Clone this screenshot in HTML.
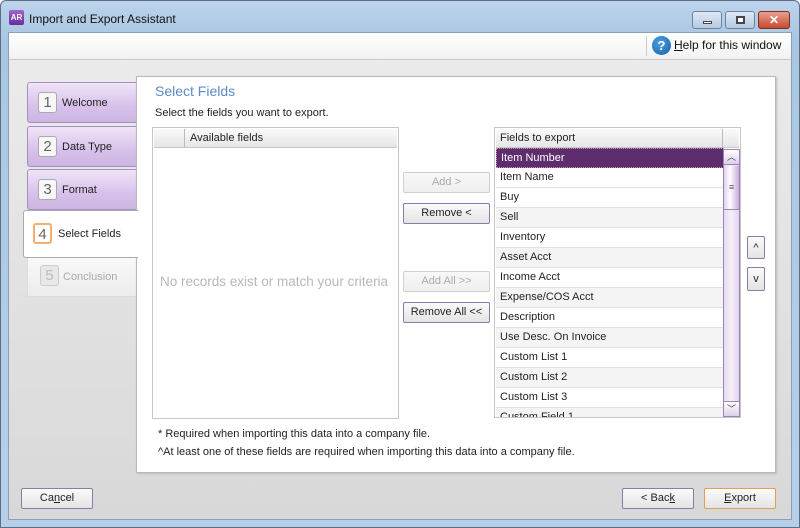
<!DOCTYPE html>
<html><head><style>
*{box-sizing:border-box;margin:0;padding:0}
body{width:800px;height:528px;overflow:hidden;font-family:"Liberation Sans",sans-serif;font-size:11px;color:#222;background:#fff;position:relative}
.abs{position:absolute}
.frame{left:0;top:0;width:800px;height:528px;background:linear-gradient(#bcd3ea,#a9c6e3 40px,#b7d0ea);border:1px solid #5a6f86;border-radius:6px 6px 0 0}
.inner{left:8px;top:32px;width:784px;height:488px;background:linear-gradient(#ececec,#d8d8d8);border:1px solid #8aa0b8}
.tb{left:9px;top:33px;width:782px;height:27px;background:linear-gradient(#fff,#f2f2f2);border-bottom:1px solid #c8c8c8}
.btn{position:absolute;height:21px;border:1px solid #8e7aa8;border-radius:2px;background:linear-gradient(#fafafa,#e4e4e4);text-align:center;line-height:19px;font-size:11px;color:#222}
.dis{border-color:#d0d0d0;color:#aaa;background:linear-gradient(#f8f8f8,#efefef)}
.tab{position:absolute;left:27px;width:110px;height:41px;border:1px solid #a58fc0;border-radius:3px 0 0 3px;background:linear-gradient(#f0e4f8,#d7c1ea 60%,#cdb4e4);font-size:11px;line-height:40px}
.num{position:absolute;left:10px;top:9px;width:19px;height:21px;border:1px solid #aaa;border-radius:3px;background:#f7f7f7;text-align:center;line-height:19px;font-size:15px;color:#666}
.tab span.l{position:absolute;left:34px;top:0}
.row{position:absolute;left:0;width:228px;height:20px;line-height:18px;padding-left:4px;border-bottom:1px solid #e2e2e2;font-size:11px}
</style></head><body>
<div class="abs frame"></div>
<div class="abs" style="left:9px;top:10px;width:15px;height:15px;background:linear-gradient(#a064d0,#6a2c9c);border-radius:2px;color:#fff;font-size:8px;font-weight:bold;line-height:15px;text-align:center">AR</div>
<div class="abs" style="left:29px;top:12px;font-size:12px;color:#111">Import and Export Assistant</div>
<div class="abs" style="left:692px;top:11px;width:30px;height:18px;border:1px solid #6d82a0;border-radius:3px;background:linear-gradient(#dfe9f5,#b6c9e0)"><div class="abs" style="left:10px;top:9px;width:9px;height:3px;background:#fff;border:1px solid #445"></div></div>
<div class="abs" style="left:725px;top:11px;width:30px;height:18px;border:1px solid #6d82a0;border-radius:3px;background:linear-gradient(#dfe9f5,#b6c9e0)"><div class="abs" style="left:10px;top:4px;width:9px;height:8px;border:2px solid #445;background:#fff"></div></div>
<div class="abs" style="left:758px;top:11px;width:32px;height:18px;border:1px solid #7a3020;border-radius:3px;background:linear-gradient(#e8a090,#c64a30);color:#fff;font-weight:bold;text-align:center;line-height:16px;font-size:12px">✕</div>
<div class="abs inner"></div>
<div class="abs tb"></div>
<div class="abs" style="left:646px;top:36px;width:1px;height:20px;background:#ccc"></div>
<div class="abs" style="left:652px;top:36px;width:19px;height:19px;border-radius:50%;background:radial-gradient(circle at 40% 35%,#4aa0e0,#1560a8);color:#fff;font-weight:bold;text-align:center;line-height:19px;font-size:13px">?</div>
<div class="abs" style="left:674px;top:38px;font-size:12px;color:#111"><u>H</u>elp for this window</div>

<div class="tab" style="top:82px"><div class="num">1</div><span class="l">Welcome</span></div>
<div class="tab" style="top:126px"><div class="num">2</div><span class="l">Data Type</span></div>
<div class="tab" style="top:169px"><div class="num">3</div><span class="l">Format</span></div>
<div class="abs" style="left:27px;top:254px;width:110px;height:43px;border:1px solid #ddd;background:linear-gradient(#fafafa,#ececec)"><div class="num" style="left:12px;top:10px;color:#bbb;border-color:#ccc;background:#e8e8e8">5</div><span class="abs" style="left:35px;top:16px;color:#aaa">Conclusion</span></div>

<div class="abs" style="left:136px;top:76px;width:640px;height:397px;background:#fff;border:1px solid #b8b8b8;box-shadow:1px 1px 2px #bbb"></div>
<div class="abs" style="left:23px;top:210px;width:115px;height:48px;background:#fff;border:1px solid #aaa;border-right:none;border-radius:3px 0 0 3px"><div class="num" style="left:9px;top:12px;border:2px solid #f0b070;background:#fff">4</div><span class="abs" style="left:34px;top:17px">Select Fields</span></div>

<div class="abs" style="left:155px;top:83px;font-size:14px;color:#5a8cc8">Select Fields</div>
<div class="abs" style="left:155px;top:107px">Select the fields you want to export.</div>

<div class="abs" style="left:152px;top:127px;width:247px;height:292px;border:1px solid #c6c6c6;background:#fff">
<div class="abs" style="left:1px;top:1px;width:243px;height:19px;background:linear-gradient(#fafafa,#e6e6e6);border-bottom:1px solid #c8c8c8"><div class="abs" style="left:30px;top:0;width:1px;height:19px;background:#bbb"></div><span class="abs" style="left:36px;top:3px">Available fields</span></div>
<div class="abs" style="left:7px;top:146px;font-size:13.5px;color:#b8b8b8;white-space:nowrap">No records exist or match your criteria</div>
</div>

<div class="btn dis" style="left:403px;top:172px;width:87px">Add &gt;</div>
<div class="btn" style="left:403px;top:203px;width:87px">Remove &lt;</div>
<div class="btn dis" style="left:403px;top:271px;width:87px">Add All &gt;&gt;</div>
<div class="btn" style="left:403px;top:302px;width:87px">Remove All &lt;&lt;</div>

<div class="abs" style="left:494px;top:127px;width:247px;height:291px;border:1px solid #c6c6c6;background:#fff;overflow:hidden">
<div class="abs" style="left:1px;top:1px;width:243px;height:19px;background:linear-gradient(#fafafa,#e6e6e6);border-bottom:1px solid #c8c8c8"><span class="abs" style="left:4px;top:3px">Fields to export</span><div class="abs" style="left:226px;top:0;width:1px;height:19px;background:#bbb"></div></div>
<div class="abs" style="left:1px;top:20px;width:228px;height:270px">
<div class="row" style="top:0;background:#5e2d6e;color:#fff;border:1px dotted #c9a">Item Number</div>
<div class="row" style="top:20px">Item Name</div>
<div class="row" style="top:40px">Buy</div>
<div class="row" style="top:60px;background:#f4f4f4">Sell</div>
<div class="row" style="top:80px">Inventory</div>
<div class="row" style="top:100px;background:#f4f4f4">Asset Acct</div>
<div class="row" style="top:120px">Income Acct</div>
<div class="row" style="top:140px;background:#f4f4f4">Expense/COS Acct</div>
<div class="row" style="top:160px">Description</div>
<div class="row" style="top:180px;background:#f4f4f4">Use Desc. On Invoice</div>
<div class="row" style="top:200px">Custom List 1</div>
<div class="row" style="top:220px;background:#f4f4f4">Custom List 2</div>
<div class="row" style="top:240px">Custom List 3</div>
<div class="row" style="top:260px;background:#f4f4f4">Custom Field 1</div>
</div>
<div class="abs" style="left:228px;top:21px;width:17px;height:268px;background:linear-gradient(90deg,#e6dcef,#f6f0fa,#e0d2ec);border:1px solid #9d84b6">
<div class="abs" style="left:0;top:0;width:15px;height:15px;background:linear-gradient(#fff,#ddd0ea);border-bottom:1px solid #9d84b6;text-align:center;font-size:9px;line-height:15px;color:#444">︿</div>
<div class="abs" style="left:0;top:16px;width:15px;height:44px;background:linear-gradient(90deg,#e0d0ee,#fff 40%,#c8a8e0);border-bottom:1px solid #9d84b6;text-align:center;line-height:42px;font-size:9px;color:#555">≡</div>
<div class="abs" style="left:0;top:251px;width:15px;height:15px;background:linear-gradient(#fff,#ddd0ea);border-top:1px solid #9d84b6;text-align:center;font-size:9px;line-height:15px;color:#444">﹀</div>
</div>
</div>

<div class="btn" style="left:747px;top:236px;width:18px;height:23px;line-height:22px">^</div>
<div class="btn" style="left:747px;top:267px;width:18px;height:24px;line-height:22px">v</div>

<div class="abs" style="left:158px;top:428px">* Required when importing this data into a company file.</div>
<div class="abs" style="left:158px;top:446px">^At least one of these fields are required when importing this data into a company file.</div>

<div class="btn" style="left:21px;top:488px;width:72px">Ca<u>n</u>cel</div>
<div class="btn" style="left:622px;top:488px;width:72px">&lt; Bac<u>k</u></div>
<div class="btn" style="left:704px;top:488px;width:72px;border-color:#e0a050"><u>E</u>xport</div>
</body></html>
